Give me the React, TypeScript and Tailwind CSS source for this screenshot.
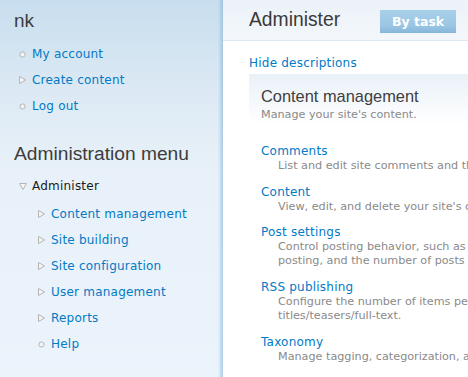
import React from "react";

const Leaf = () => (
  <svg width="7" height="7" viewBox="0 0 7 7" className="shrink-0">
    <circle cx="3.5" cy="3.5" r="2.6" fill="#f4f4f4" stroke="#b4b4b4" strokeWidth="1" />
  </svg>
);
const Collapsed = () => (
  <svg width="7" height="8" viewBox="0 0 7 8" className="shrink-0">
    <path d="M0.5 0.5 L6.5 4 L0.5 7.5 Z" fill="#f6f6f6" stroke="#b4b4b4" strokeWidth="1" strokeLinejoin="round" />
  </svg>
);
const Expanded = () => (
  <svg width="8" height="7" viewBox="0 0 8 7" className="shrink-0">
    <path d="M0.5 0.5 L7.5 0.5 L4 6.5 Z" fill="#f6f6f6" stroke="#b4b4b4" strokeWidth="1" strokeLinejoin="round" />
  </svg>
);

function MenuItem({
  icon,
  label,
  indent,
  dark,
}: {
  icon: React.ReactNode;
  label: string;
  indent?: boolean;
  dark?: boolean;
}) {
  return (
    <div className={`flex items-center h-[26px] ${indent ? "pl-[24px]" : "pl-[5px]"}`}>
      <div className="w-[13px] flex items-center">{icon}</div>
      <span className={`leading-[26px] tracking-[0.22px] ${dark ? "text-[#1a1a1a]" : "text-[#027ac6]"}`}>{label}</span>
    </div>
  );
}

const items: { t: string; d: string }[] = [
  { t: "Comments", d: "List and edit site comments and the comment moderation queue." },
  { t: "Content", d: "View, edit, and delete your site's content." },
  {
    t: "Post settings",
    d: "Control posting behavior, such as teaser length, requiring previews before posting, and the number of posts on the front page.",
  },
  {
    t: "RSS publishing",
    d: "Configure the number of items per feed and whether feeds should be titles/teasers/full-text.",
  },
  { t: "Taxonomy", d: "Manage tagging, categorization, and classification of your content." },
];

export default function App() {
  return (
    <div
      className="w-[468px] h-[377px] overflow-hidden flex bg-white text-[12px]"
      style={{ fontFamily: '"DejaVu Sans", Verdana, sans-serif' }}
    >
      {/* Sidebar */}
      <div className="relative w-[223px] shrink-0 h-full bg-[linear-gradient(to_bottom,#c8deee_0px,#dce9f4_90px,#e8f1f9_170px,#ebf3fb_377px)] pl-[14px] pt-[9px]">
        <div className="absolute right-0 top-0 h-full w-[5px] bg-[linear-gradient(to_right,rgba(150,190,220,0),rgba(130,178,214,0.6))]" />
        <h2
          className="text-[19px] leading-[24px] text-[#3c3c3c]"
          style={{ fontFamily: '"Liberation Sans", Arial, sans-serif' }}
        >
          nk
        </h2>
        <div className="mt-[8px]">
          <MenuItem icon={<Leaf />} label="My account" />
          <MenuItem icon={<Collapsed />} label="Create content" />
          <MenuItem icon={<Leaf />} label="Log out" />
        </div>
        <h2
          className="mt-[23px] text-[19.2px] leading-[24px] text-[#3c3c3c]"
          style={{ fontFamily: '"Liberation Sans", Arial, sans-serif' }}
        >
          Administration menu
        </h2>
        <div className="mt-[7px]">
          <MenuItem icon={<Expanded />} label="Administer" dark />
          <div className="mt-[2px]">
            <MenuItem icon={<Collapsed />} label="Content management" indent />
            <MenuItem icon={<Collapsed />} label="Site building" indent />
            <MenuItem icon={<Collapsed />} label="Site configuration" indent />
            <MenuItem icon={<Collapsed />} label="User management" indent />
            <MenuItem icon={<Collapsed />} label="Reports" indent />
            <MenuItem icon={<Leaf />} label="Help" indent />
          </div>
        </div>
      </div>

      {/* Main */}
      <div className="flex-1 min-w-0 h-full">
        <div className="w-[600px]">
          <div className="h-[41px] border-b border-[#dfe7ee] bg-[linear-gradient(to_bottom,#ebf2f8,#f3f7fb)] pl-[26px] flex items-start">
            <h1
              className="mt-[8px] text-[19.3px] leading-[24px] text-[#3a3a3a]"
              style={{ fontFamily: '"Liberation Sans", Arial, sans-serif' }}
            >
              Administer
            </h1>
            <div className="ml-[40px] mt-[10px] w-[76px] h-[23px] bg-[linear-gradient(to_bottom,#a9d0e9,#9ac5e3_70%,#85b6da)] flex items-center justify-center">
              <span className="text-white font-bold text-[12.5px] leading-[23px]">By task</span>
            </div>
          </div>
          <div className="pl-[26px] pt-[14px]">
            <div className="leading-[16px] tracking-[0.22px] text-[#027ac6]">Hide descriptions</div>
            <div className="mt-[3px] pl-[12px] pt-[12px] bg-[linear-gradient(to_bottom,#e9f1f8,#f6f9fc_30px,#ffffff_50px)]">
              <h3
                className="text-[16.4px] leading-[20px] text-[#404040]"
                style={{ fontFamily: '"Liberation Sans", Arial, sans-serif' }}
              >
                Content management
              </h3>
              <div className="mt-[2px] text-[11.2px] leading-[14px] text-[#8a8a8a]">Manage your site's content.</div>
              <dl className="mt-[21px]">
                {items.map((it) => (
                  <div key={it.t}>
                    <dt className="leading-[16px] tracking-[0.22px] text-[#027ac6]">{it.t}</dt>
                    <dd className="ml-[17px] w-[450px] mb-[10.7px] text-[11.2px] leading-[14px] text-[#8a8a8a]">
                      {it.d}
                    </dd>
                  </div>
                ))}
              </dl>
            </div>
          </div>
        </div>
      </div>
    </div>
  );
}
